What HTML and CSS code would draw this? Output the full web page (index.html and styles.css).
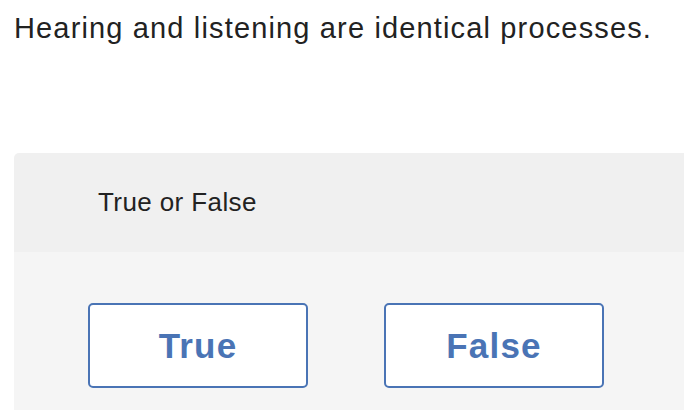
FILE: index.html
```html
<!DOCTYPE html>
<html>
<head>
<meta charset="utf-8">
<link rel="stylesheet" href="styles.css">
</head>
<body>
<p class="question">Hearing and listening are identical processes.</p>
<div class="panel">
  <div class="panel-head">True or False</div>
  <div class="panel-body">
    <button class="choice">True</button>
    <button class="choice">False</button>
  </div>
</div>
</body>
</html>
```

FILE: styles.css
```css
html, body {
  margin: 0;
  padding: 0;
  background: #ffffff;
  overflow: hidden;
}
body {
  font-family: "Liberation Sans", Arial, sans-serif;
  color: #222222;
}
.question {
  margin: 0;
  padding: 10px 0 0 14px;
  font-size: 29px;
  line-height: 36px;
  letter-spacing: 1.15px;
  white-space: nowrap;
}
.panel {
  margin: 107px 0 0 14px;
  border-radius: 5px 0 0 0;
  overflow: hidden;
}
.panel-head {
  background: #f0f0f0;
  height: 99px;
  box-sizing: border-box;
  padding-left: 84px;
  display: flex;
  align-items: center;
  font-size: 26px;
  letter-spacing: 0.4px;
  color: #222222;
}
.panel-body {
  background: #f5f5f5;
  height: 170px;
  box-sizing: border-box;
  padding: 51px 0 0 74px;
  display: flex;
  align-items: flex-start;
  gap: 76px;
}
.choice {
  width: 220px;
  height: 85px;
  box-sizing: border-box;
  background: #ffffff;
  border: 2px solid #4a74b5;
  border-radius: 5px;
  color: #4a74b5;
  font-family: "Liberation Sans", Arial, sans-serif;
  font-weight: 700;
  font-size: 35px;
  letter-spacing: 1.2px;
  padding: 0;
}
```
